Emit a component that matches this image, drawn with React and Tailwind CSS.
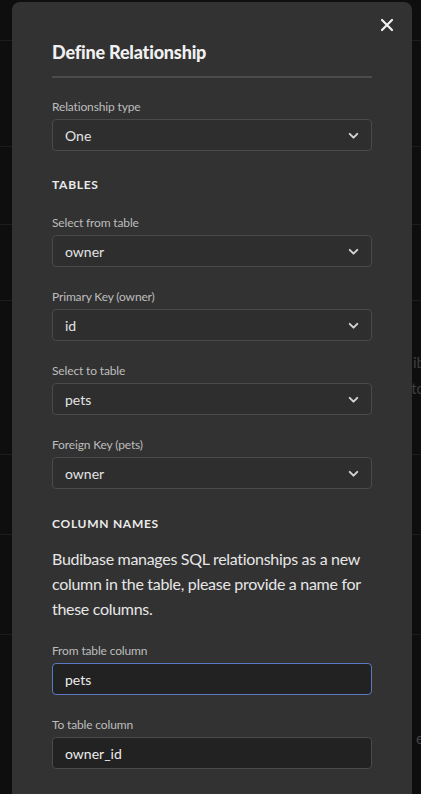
const font = { fontFamily: 'Lato, "Noto Sans", sans-serif' }

function Chevron() {
  return (
    <svg width="13" height="13" viewBox="0 0 12 12" fill="none" stroke="#d4d4d4" strokeWidth="1.8" strokeLinecap="round" strokeLinejoin="round">
      <path d="M2.5 4.5 6 8l3.5-3.5" />
    </svg>
  )
}

function Picker({ label, value }) {
  return (
    <div className="flex flex-col">
      <span className="text-[12px] tracking-[-0.15px] text-[#bdbdbd] leading-[16px] mb-[4px]">{label}</span>
      <div className="flex items-center justify-between h-[32px] rounded-[4px] border border-[#4a4a4a] bg-[#2e2e2e] pl-[12px] pr-[11px]">
        <span className="text-[14px] text-[#e3e3e3]">{value}</span>
        <Chevron />
      </div>
    </div>
  )
}

function TextField({ label, value, focused }) {
  return (
    <div className="flex flex-col">
      <span className="text-[12px] tracking-[-0.15px] text-[#bdbdbd] leading-[16px] mb-[4px]">{label}</span>
      <div
        className={`flex items-center h-[32px] rounded-[4px] border bg-[#222222] pl-[12px] ${
          focused ? 'border-[#5b78c4]' : 'border-[#4a4a4a]'
        }`}
      >
        <span className="text-[14px] text-[#ececec]">{value}</span>
      </div>
    </div>
  )
}

export default function App() {
  return (
    <div className="relative w-[421px] h-[794px] overflow-hidden bg-[#0e0e0e]" style={font}>
      {/* app behind the modal */}
      <div className="flex flex-col">
        <div className="h-[41px] border-b border-[#1e1e1e]" />
        <div className="h-[106px] border-b border-[#1c1c1c]" />
        <div className="h-[78px] border-b border-[#1c1c1c]" />
        <div className="h-[76px] border-b border-[#1c1c1c] flex justify-end items-end">
          <span className="text-[22px] text-[#3a3a3a] mr-[-6px] mb-[-10px]">(</span>
        </div>
        <div className="h-[154px] border-b border-[#1c1c1c] flex flex-col items-end pt-[48px] text-[15px] text-[#3f3f3f] leading-[26px]">
          <span className="mr-[-4px]">ib</span>
          <span className="mr-[-4px]">to</span>
        </div>
        <div className="h-[80px] border-b border-[#1c1c1c]" />
        <div className="h-[100px] border-b border-[#1c1c1c]" />
        <div className="h-[110px] flex justify-end items-end">
          <span className="text-[15px] text-[#444] mr-[-3px] mb-[-4px]">e</span>
        </div>
      </div>

      {/* modal */}
      <div className="absolute left-[12px] top-[2px] w-[400px] h-[820px] rounded-[8px] bg-[#323232] px-[40px] pt-[36px]">
        <button className="absolute right-[14px] top-[12px] w-[22px] h-[22px] flex items-center justify-center">
          <svg width="14" height="14" viewBox="0 0 14 14" stroke="#f2f2f2" strokeWidth="2.2" strokeLinecap="round">
            <path d="M2 2l10 10M12 2 2 12" />
          </svg>
        </button>

        <h2 className="text-[18px] font-black tracking-[-0.2px] text-[#f0f0f0] leading-[28px]">Define Relationship</h2>
        <div className="h-[2px] bg-[#4b4b4b] mt-[10px] mb-[21px]" />

        <Picker label="Relationship type" value="One" />

        <div className="text-[12px] font-bold tracking-[0.06em] text-[#eaeaea] mt-[26px] mb-[22px] leading-[16px]">TABLES</div>

        <div className="flex flex-col gap-[22px]">
          <Picker label="Select from table" value="owner" />
          <Picker label="Primary Key (owner)" value="id" />
          <Picker label="Select to table" value="pets" />
          <Picker label="Foreign Key (pets)" value="owner" />
        </div>

        <div className="text-[12px] font-bold tracking-[0.06em] text-[#eaeaea] mt-[27px] mb-[14px] leading-[16px]">COLUMN NAMES</div>

        <p className="text-[16px] tracking-[-0.3px] text-[#e6e6e6] leading-[25px] mb-[22px]">
          Budibase manages SQL relationships as a new column in the table, please provide a name for these columns.
        </p>

        <div className="flex flex-col gap-[22px]">
          <TextField label="From table column" value="pets" focused />
          <TextField label="To table column" value="owner_id" />
        </div>
      </div>
    </div>
  )
}
